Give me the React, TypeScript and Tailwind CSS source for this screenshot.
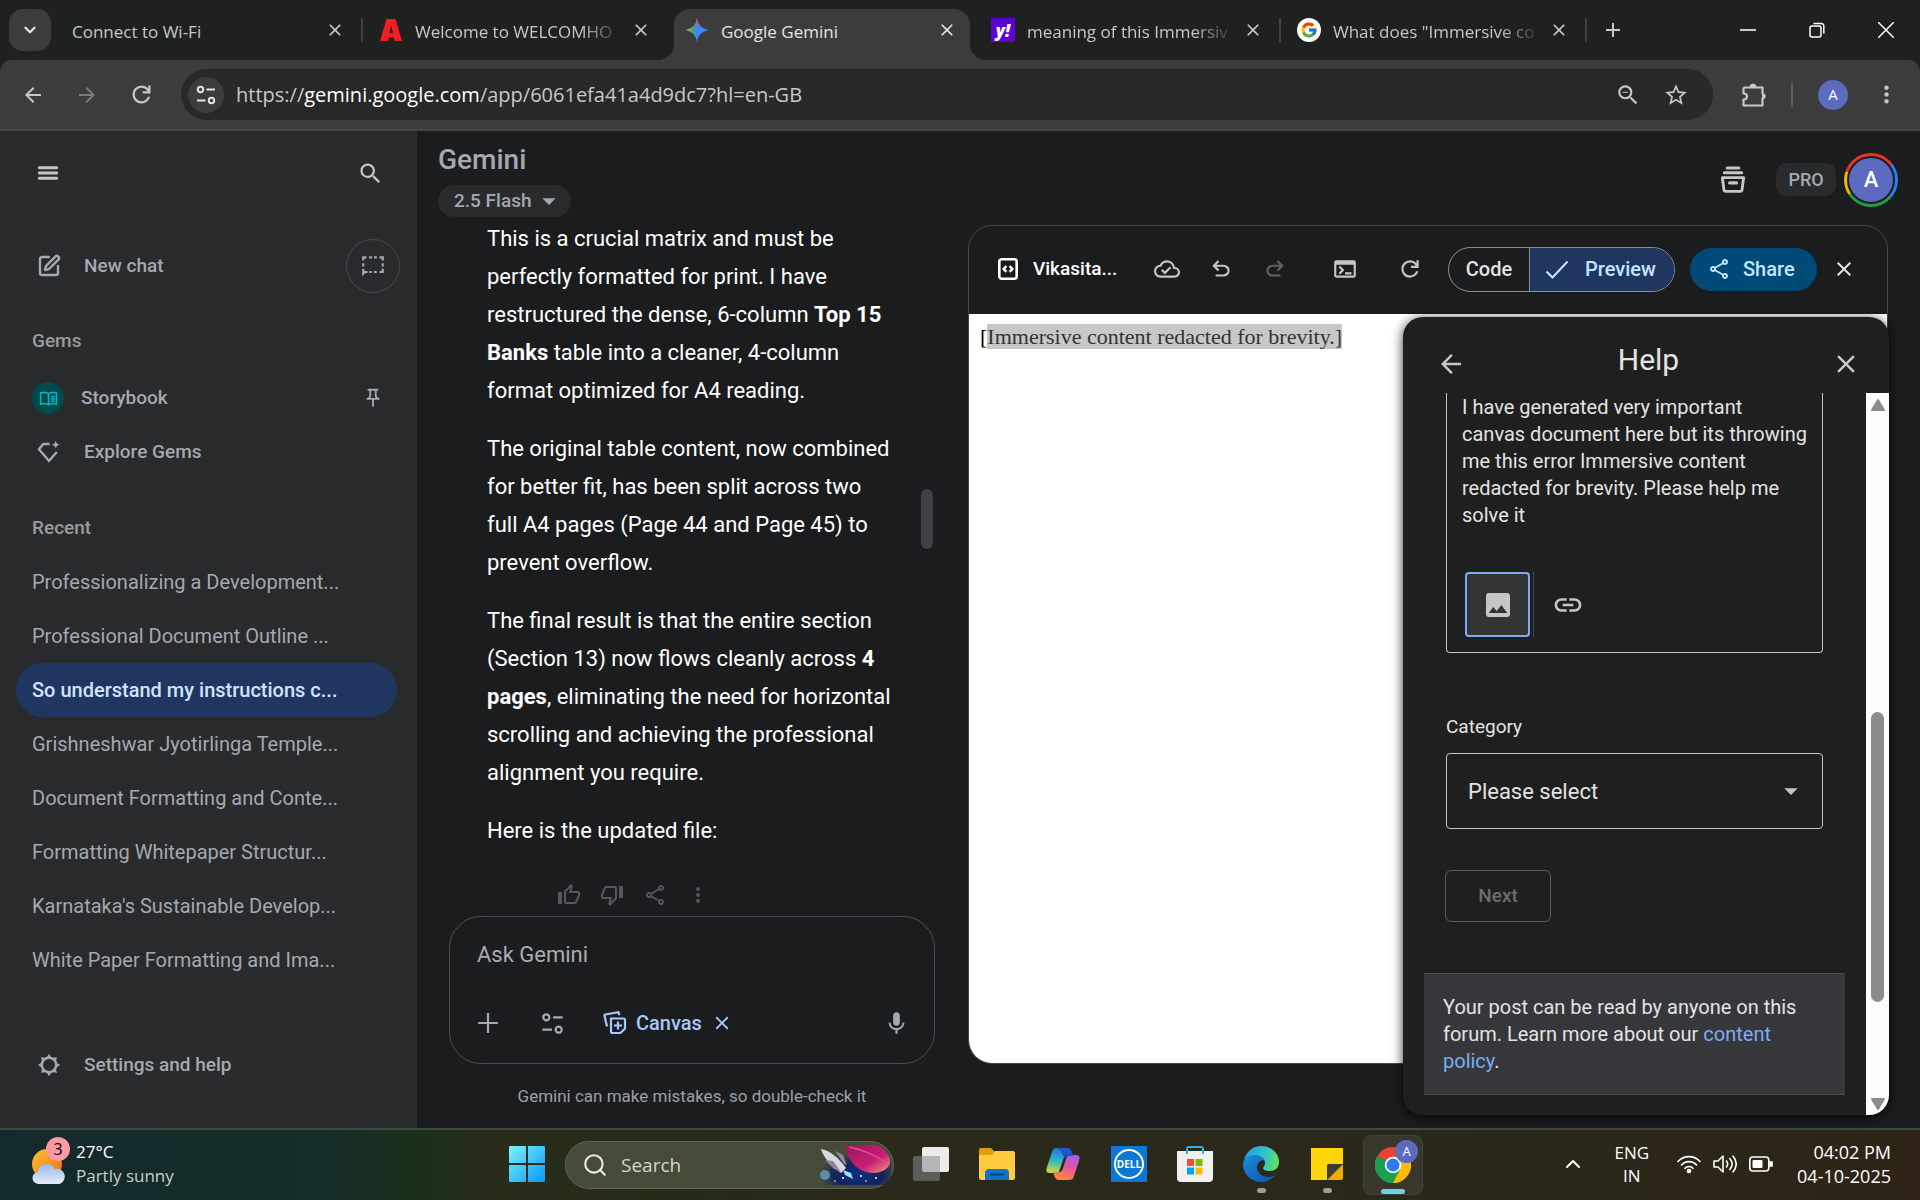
import React from "react";
import {
  MdAdd,
  MdArrowBack,
  MdArrowDropDown,
  MdArrowForward,
  MdClose,
  MdImage,
  MdLink,
  MdMic,
  MdMoreVert,
  MdOutlineCloudDone,
  MdOutlinePushPin,
  MdOutlineShare,
  MdOutlineTerminal,
  MdOutlineThumbDown,
  MdOutlineThumbUp,
  MdSearch,
  MdStarOutline,
  MdZoomOut,
} from "react-icons/md";
import { FcGoogle } from "react-icons/fc";
import { ChevronDown, ChevronUp, Search, SquarePen } from "lucide-react";

interface IconProps {
  className?: string;
}

function RefreshIcon({ className }: IconProps) {
  return (
    <svg viewBox="0 -960 960 960" fill="currentColor" className={className}>
      <path d="M480-160q-134 0-227-93t-93-227q0-134 93-227t227-93q69 0 132 28.5T720-690v-110h80v280H520v-80h168q-32-56-87.5-88T480-720q-100 0-170 70t-70 170q0 100 70 170t170 70q77 0 139-44t87-116h84q-28 106-114 173t-196 67Z" />
    </svg>
  );
}

function UndoIcon({ className }: IconProps) {
  return (
    <svg viewBox="0 -960 960 960" fill="currentColor" className={className}>
      <path d="M280-200v-80h284q63 0 109.5-40T720-420q0-60-46.5-100T564-560H312l104 104-56 56-200-200 200-200 56 56-104 104h252q97 0 166.5 63T800-420q0 94-69.5 157T564-200H280Z" />
    </svg>
  );
}

function PuzzleIcon({ className }: IconProps) {
  return (
    <svg viewBox="0 0 26 26" fill="none" stroke="currentColor" strokeWidth="2.200" strokeLinejoin="round" className={className}>
      <path d="M2.500 5.500h19v6.500M21.500 16v7.500h-19v-6c2.200 0 3.500-1.300 3.500-3s-1.300-3-3.500-3v-6" />
      <path d="M9 5a3 3 0 0 1 6 0zM21.500 11.500a2.700 2.700 0 0 1 0 5.400z" fill="currentColor" strokeWidth="1" />
    </svg>
  );
}

function TuneIcon({ className }: IconProps) {
  return (
    <svg viewBox="0 0 24 24" fill="none" stroke="currentColor" strokeWidth="2" className={className}>
      <circle cx="6.5" cy="6.5" r="2.7" />
      <path d="M12.5 6.5H21M3 17.5h8.5" />
      <circle cx="17.5" cy="17.5" r="2.7" />
    </svg>
  );
}

function TempChatIcon({ className }: IconProps) {
  return (
    <svg viewBox="0 0 24 24" fill="none" stroke="currentColor" strokeWidth="2" className={className}>
      <path d="M3 7V4h3M8.500 4H11M13 4h2.500M18 4h3v3M21 9.500v3M21 14.500v3h-3M15.500 17.500H13M11 17.500H8.500M3 9.500v3" />
      <path d="M2 14.500h2v2h3v2H5l-3 3z" fill="currentColor" stroke="none" />
    </svg>
  );
}

function GemIcon({ className }: IconProps) {
  return (
    <svg viewBox="0 0 24 24" fill="none" stroke="currentColor" strokeWidth="2.400" className={className}>
      <path d="M12.500 4H6.200L2 9.300 12 21l7.800-9" />
      <path
        d="M18.800.5c.5 2.700 1.500 3.700 4.200 4.300-2.700.6-3.700 1.600-4.200 4.300-.6-2.700-1.600-3.700-4.300-4.300 2.700-.6 3.700-1.600 4.300-4.300z"
        fill="currentColor"
        stroke="none"
      />
    </svg>
  );
}

function BookIcon({ className }: IconProps) {
  return (
    <svg viewBox="0 0 24 24" fill="none" stroke="currentColor" strokeWidth="2" className={className}>
      <path d="M12 6C9 4 5 4 2 5v14c3-1 7-1 10 1 3-2 7-2 10-1V5c-3-1-7-1-10 1zM12 6v14M15 9.500h5M15 12.500h5M15 15.500h5" />
    </svg>
  );
}

function SettingsIcon({ className }: IconProps) {
  return (
    <svg viewBox="0 0 24 24" className={className}>
      <circle cx="12" cy="12" r="7.200" fill="none" stroke="currentColor" strokeWidth="2.400" />
      <path
        d="M12 .8l2.300 3.700H9.700zM12 23.200l2.300-3.700H9.700zM.8 12l3.700-2.300v4.600zM23.200 12l-3.700-2.300v4.600zM4.100 4.100l4.200.9L5 8.300zM19.900 4.100l-4.200.9L19 8.300zM4.100 19.900l4.200-.9L5 15.700zM19.900 19.900l-4.200-.9 3.300-3.300z"
        fill="currentColor"
      />
    </svg>
  );
}

function HistoryJarIcon({ className }: IconProps) {
  return (
    <svg viewBox="0 0 26 28" fill="none" stroke="currentColor" className={className}>
      <path d="M7 2h12M4 7h18" strokeWidth="3.200" strokeLinecap="round" />
      <path d="M2 12h22l-1.600 12.500a2 2 0 0 1-2 1.800H5.600a2 2 0 0 1-2-1.800z" strokeWidth="3" strokeLinejoin="round" />
      <path d="M9.500 17.500h7" strokeWidth="3.400" strokeLinecap="round" />
    </svg>
  );
}

function CanvasIcon({ className }: IconProps) {
  return (
    <svg viewBox="0 0 24 24" fill="none" stroke="currentColor" strokeWidth="2.200" className={className}>
      <path d="M4 15.500L1.500 4.700a1 1 0 0 1 .8-1.200L15.500 1.200l.9 3" />
      <path d="M8 7.500h12.500a1.500 1.500 0 0 1 1.500 1.500v8.500L17.500 22H9.500A1.500 1.500 0 0 1 8 20.500z" />
      <path d="M15 10.500v8M11 14.500h8" />
    </svg>
  );
}

function CodeFileIcon({ className }: IconProps) {
  return (
    <svg viewBox="0 0 24 24" fill="none" stroke="currentColor" strokeWidth="2.400" className={className}>
      <rect x="4" y="3" width="16" height="18" rx="2" />
      <path d="M10.500 9.300L8 12l2.500 2.700M13.500 9.300L16 12l-2.500 2.700" strokeWidth="2.200" />
    </svg>
  );
}

const tabs = [
  { title: "Connect to Wi-Fi", icon: null, divider: true },
  { title: "Welcome to WELCOMHO", icon: "airport", faded: true },
  { title: "Google Gemini", icon: "gemini", active: true },
  { title: "meaning of this Immersiv", icon: "yahoo", faded: true, divider: true },
  { title: 'What does "Immersive co', icon: "google", faded: true, divider: true },
];

function Favicon({ kind }: { kind: string }) {
  if (kind === "airport") {
    return (
      <svg viewBox="0 0 22 24" className="h-6 w-[22px]">
        <path
          fillRule="evenodd"
          fill="#f31b24"
          d="M6.500 1h9L22 23h-7.500l-.8-3.500H9L8.200 23H0zM11 8l-1.500 7h3.600z"
        />
      </svg>
    );
  }
  if (kind === "gemini") {
    return (
      <svg viewBox="0 0 24 24" className="size-6">
        <defs>
          <linearGradient id="spark" x1="0" y1="0.5" x2="1" y2="0.5">
            <stop offset="0" stopColor="#fbbc04" />
            <stop offset="0.28" stopColor="#4cae6a" />
            <stop offset="0.5" stopColor="#3f86f5" />
            <stop offset="1" stopColor="#3186ff" />
          </linearGradient>
          <linearGradient id="sparkTop" x1="0.5" y1="0" x2="0.5" y2="1">
            <stop offset="0" stopColor="#fa4340" />
            <stop offset="0.4" stopColor="#fa4340" stopOpacity="0" />
          </linearGradient>
        </defs>
        <path fill="url(#spark)" d="M12 0c1.200 7 5 10.800 12 12-7 1.200-10.800 5-12 12C10.800 17 7 13.200 0 12 7 10.800 10.800 7 12 0z" />
        <path fill="url(#sparkTop)" d="M12 0c1.200 7 5 10.800 12 12-7 1.200-10.800 5-12 12C10.800 17 7 13.200 0 12 7 10.800 10.800 7 12 0z" />
      </svg>
    );
  }
  if (kind === "yahoo") {
    return (
      <span className="flex size-6 items-center justify-center bg-[#5f01d1] text-[17px] leading-none font-black text-white italic">
        y!
      </span>
    );
  }
  return (
    <span className="flex size-6 items-center justify-center rounded-full bg-white">
      <FcGoogle className="size-[18px]" />
    </span>
  );
}

function TabStrip() {
  return (
    <div className="flex h-[60px] shrink-0 bg-[#1f2120] font-['Open_Sans',sans-serif] text-[#c7c7c7]">
      <div className="flex w-[57px] shrink-0 items-center pl-[9px]">
        <button aria-label="Search tabs" className="flex size-[42px] items-center justify-center rounded-[14px] bg-[#3c3c3c] text-[#e3e3e3]">
          <ChevronDown className="size-[18px]" strokeWidth={3} />
        </button>
      </div>
      {tabs.map((tab) => (
        <div key={tab.title} className="relative flex w-[306px] min-w-0 px-[5px] pt-[9px]">
          <div
            className={`flex min-w-0 flex-1 items-center pr-[13px] pb-[9px] pl-[10px] ${
              tab.active ? "rounded-t-2xl bg-[#3c3c3c] text-[#e3e3e3]" : ""
            }`}
          >
            {tab.icon && (
              <span className="mr-3 ml-px flex w-6 shrink-0 justify-center">
                <Favicon kind={tab.icon} />
              </span>
            )}
            <span
              className={`min-w-0 flex-1 overflow-hidden pt-[3px] text-[17px] leading-6 whitespace-nowrap ${
                tab.faded ? "[mask-image:linear-gradient(to_right,black_80%,transparent)]" : ""
              }`}
            >
              {tab.title}
            </span>
            <button aria-label={`Close ${tab.title}`} className="ml-2 shrink-0">
              <MdClose className="size-5" />
            </button>
          </div>
          {tab.active && (
            <>
              <span className="absolute bottom-0 left-[-11px] size-4 bg-[radial-gradient(circle_at_0_0,#1f2120_16px,#3c3c3c_16px)]" />
              <span className="absolute right-[-11px] bottom-0 size-4 bg-[radial-gradient(circle_at_100%_0,#1f2120_16px,#3c3c3c_16px)]" />
            </>
          )}
          {tab.divider && <span className="absolute top-[18px] right-0 h-6 w-[2px] bg-[#3f4140]" />}
        </div>
      ))}
      <button aria-label="New tab" className="flex w-[52px] items-center justify-center">
        <MdAdd className="size-6" />
      </button>
      <div className="ml-auto flex items-center text-white">
        <button aria-label="Minimize" className="flex w-[69px] justify-center">
          <svg viewBox="0 0 16 16" className="size-4">
            <path d="M0 8h16" stroke="currentColor" strokeWidth="1.500" />
          </svg>
        </button>
        <button aria-label="Restore" className="flex w-[69px] justify-center">
          <svg viewBox="0 0 16 16" className="size-4" fill="none" stroke="currentColor" strokeWidth="1.500">
            <rect x="1" y="4" width="11" height="11" rx="2" />
            <path d="M4.500 1.500H12A2.500 2.500 0 0 1 14.800 4v7.500" />
          </svg>
        </button>
        <button aria-label="Close window" className="flex w-[69px] justify-center">
          <svg viewBox="0 0 16 16" className="size-4" fill="none" stroke="currentColor" strokeWidth="1.500">
            <path d="M0 0l16 16M16 0L0 16" />
          </svg>
        </button>
      </div>
    </div>
  );
}

function Toolbar() {
  return (
    <div className="shrink-0 bg-[#1f2120]">
      <div className="flex h-[71px] items-center rounded-t-xl border-b-2 border-[#444746] bg-[#3c3c3c] text-[#c7c7c7]">
        <div className="flex w-[181px] shrink-0 items-center pl-[6px]">
          <button aria-label="Back" className="flex w-[54px] justify-center">
            <MdArrowBack className="size-6" />
          </button>
          <button aria-label="Forward" disabled className="flex w-[54px] justify-center text-[#7b7b7b]">
            <MdArrowForward className="size-6" />
          </button>
          <button aria-label="Reload" className="flex w-[54px] justify-center">
            <RefreshIcon className="size-[27px]" />
          </button>
        </div>
        <div className="flex h-[51px] min-w-0 flex-1 items-center rounded-full bg-[#282828] pr-6 pl-[7px]">
          <button aria-label="Site information" className="mr-3 flex size-9 shrink-0 items-center justify-center rounded-full bg-[#3c3c3c] text-[#e3e3e3]">
            <TuneIcon className="size-6" />
          </button>
          <div className="min-w-0 flex-1 truncate font-['Open_Sans',sans-serif] text-[20px] leading-7 text-[#c7c7c7]">
            https://<span className="text-white">gemini.google.com</span>/app/6061efa41a4d9dc7?hl=en-GB
          </div>
          <button aria-label="Zoom" className="mr-[22px]">
            <MdZoomOut className="size-[26px]" />
          </button>
          <button aria-label="Bookmark">
            <MdStarOutline className="size-[26px]" />
          </button>
        </div>
        <button aria-label="Extensions" className="mr-[24px] ml-[28px]">
          <PuzzleIcon className="size-[26px]" />
        </button>
        <span className="h-6 w-[2px] bg-[#5c5c5c]" />
        <button aria-label="Profile" className="mr-[25px] ml-[25px] flex size-[30px] items-center justify-center rounded-full bg-[#5c6bc0] font-['Open_Sans',sans-serif] text-[15px] text-white">
          A
        </button>
        <button aria-label="Chrome menu" className="mr-[20px]">
          <MdMoreVert className="size-[27px]" />
        </button>
      </div>
    </div>
  );
}

const recents = [
  "Professionalizing a Development...",
  "Professional Document Outline ...",
  "So understand my instructions c...",
  "Grishneshwar Jyotirlinga Temple...",
  "Document Formatting and Conte...",
  "Formatting Whitepaper Structur...",
  "Karnataka's Sustainable Develop...",
  "White Paper Formatting and Ima...",
];

function Sidebar() {
  return (
    <nav className="flex w-[417px] shrink-0 flex-col bg-[#282a2c] pr-5 pl-4 text-[19px] leading-6 font-medium text-[#a2a9b0]">
      <div className="mt-[15px] flex h-[54px] items-center justify-between pr-[13px] pl-[18px] text-[#c4c7c5]">
        <button aria-label="Menu">
          <svg viewBox="0 0 24 24" className="size-7" stroke="currentColor" strokeWidth="2.400" strokeLinecap="round">
            <path d="M4.500 7.500h15M4.500 12h15M4.500 16.500h15" />
          </svg>
        </button>
        <button aria-label="Search">
          <MdSearch className="size-[27px]" />
        </button>
      </div>
      <div className="mt-[39px] flex h-[54px] items-center">
        <button className="flex flex-1 items-center gap-[23px] pl-[21px] text-left">
          <SquarePen className="size-6" strokeWidth={2.4} />
          New chat
        </button>
        <button aria-label="Temporary chat" className="-mr-[3px] flex size-[54px] items-center justify-center rounded-full border border-[#47494c]">
          <TempChatIcon className="size-[26px]" />
        </button>
      </div>
      <h2 className="mt-[36px] pl-4 text-[#9a9b9c]">Gems</h2>
      <a href="#storybook" className="mt-[18px] flex h-[54px] items-center pl-4">
        <span className="mr-[17px] flex size-8 items-center justify-center rounded-full bg-[#004a4d] text-[#00b8bd]">
          <BookIcon className="size-[19px]" />
        </span>
        <span className="flex-1">Storybook</span>
        <MdOutlinePushPin className="mr-[13px] size-[22px]" />
      </a>
      <a href="#gems" className="flex h-[54px] items-center gap-[23px] pl-[21px]">
        <GemIcon className="size-6" />
        Explore Gems
      </a>
      <h2 className="mt-[37px] mb-[15px] pl-4 text-[#9a9b9c]">Recent</h2>
      <ul className="text-[20px] font-normal">
        {recents.map((title, i) => (
          <li key={title}>
            <a
              href="#chat"
              className={`flex h-[54px] items-center rounded-full pl-4 whitespace-nowrap ${
                i === 2 ? "bg-[#1f3760] font-medium text-[#d3e3fd]" : ""
              }`}
            >
              {title}
            </a>
          </li>
        ))}
      </ul>
      <button className="mt-auto mb-[36px] flex h-[54px] items-center gap-[23px] pl-[21px] text-left">
        <SettingsIcon className="size-6" />
        Settings and help
      </button>
    </nav>
  );
}

function Chat() {
  return (
    <section className="flex w-[551px] shrink-0 flex-col">
      <div className="flex min-h-0 flex-1 overflow-hidden">
        <div className="flex-1 space-y-5 pl-[70px] text-[22px] leading-[38px] whitespace-nowrap text-white">
          <p>
            This is a crucial matrix and must be
            <br />
            perfectly formatted for print. I have
            <br />
            restructured the dense, 6-column <b>Top 15</b>
            <br />
            <b>Banks</b> table into a cleaner, 4-column
            <br />
            format optimized for A4 reading.
          </p>
          <p>
            The original table content, now combined
            <br />
            for better fit, has been split across two
            <br />
            full A4 pages (Page 44 and Page 45) to
            <br />
            prevent overflow.
          </p>
          <p>
            The final result is that the entire section
            <br />
            (Section 13) now flows cleanly across <b>4</b>
            <br />
            <b>pages</b>, eliminating the need for horizontal
            <br />
            scrolling and achieving the professional
            <br />
            alignment you require.
          </p>
          <p>Here is the updated file:</p>
        </div>
        <span className="mt-[269px] mr-[35px] h-[60px] w-3 shrink-0 rounded-full bg-[#3f4043]" />
      </div>
      <div className="mb-[9px] flex shrink-0 gap-[19px] pl-[140px] text-[#55585b]">
        <button aria-label="Good response">
          <MdOutlineThumbUp className="size-6" />
        </button>
        <button aria-label="Bad response">
          <MdOutlineThumbDown className="size-6" />
        </button>
        <button aria-label="Share and export">
          <MdOutlineShare className="size-6" />
        </button>
        <button aria-label="More options">
          <MdMoreVert className="size-6" />
        </button>
      </div>
      <form className="mr-[33px] ml-8 flex h-[148px] shrink-0 flex-col justify-between rounded-[32px] border border-[#4b4d50] px-[27px] py-6">
        <input
          aria-label="Ask Gemini"
          placeholder="Ask Gemini"
          className="h-7 w-full bg-transparent text-[22px] leading-7 text-white outline-none placeholder:text-[#a8acb1]"
        />
        <div className="flex h-8 items-center text-[#a2a9b0]">
          <button type="button" aria-label="Add files" className="mr-[41px] ml-px">
            <svg viewBox="0 0 20 20" className="size-5" stroke="currentColor" strokeWidth="2.200">
              <path d="M10 0v20M0 10h20" />
            </svg>
          </button>
          <button type="button" aria-label="Tools" className="mr-[37px]">
            <TuneIcon className="size-[27px]" />
          </button>
          <button type="button" className="flex items-center gap-[9px] text-[20px] leading-6 font-medium text-[#a8c7fa]">
            <CanvasIcon className="size-6" />
            Canvas
            <MdClose className="size-[22px]" />
          </button>
          <button type="button" aria-label="Use microphone" className="-mr-[3px] ml-auto">
            <MdMic className="size-[27px]" />
          </button>
        </div>
      </form>
      <p className="mr-[33px] ml-8 h-16 shrink-0 text-center text-[17px] leading-[65px] text-[#9aa0a6]">
        Gemini can make mistakes, so double-check it
      </p>
    </section>
  );
}

function CanvasPanel() {
  return (
    <section className="mt-[5px] mr-8 mb-16 flex min-w-0 flex-1 flex-col overflow-hidden rounded-3xl border border-[#444648]">
      <div className="flex h-[88px] shrink-0 items-center pr-[31px] pb-[2px] pl-[26px] text-[#c4c7c5]">
        <CodeFileIcon className="mr-3 size-[26px] shrink-0 text-white" />
        <h2 className="w-[112px] text-[19px] leading-6 font-medium text-white">Vikasita...</h2>
        <button aria-label="Saved" className="mr-[28px] ml-[9px]">
          <MdOutlineCloudDone className="size-[26px]" />
        </button>
        <button aria-label="Undo" className="mr-[28px]">
          <UndoIcon className="size-[26px]" />
        </button>
        <button aria-label="Redo" disabled className="text-[#5f6163]">
          <UndoIcon className="size-[26px] -scale-x-100" />
        </button>
        <div className="ml-auto flex items-center">
          <button aria-label="Console" className="mr-[39px]">
            <MdOutlineTerminal className="size-[26px]" />
          </button>
          <button aria-label="Refresh preview" className="mr-[25px]">
            <RefreshIcon className="size-[26px]" />
          </button>
          <div className="mr-[15px] flex h-[45px] overflow-hidden rounded-full border border-[#8e918f] text-[20px] leading-6 font-medium">
            <button className="w-20 text-[#e3e3e3]">Code</button>
            <button className="flex w-[145px] items-center gap-4 border-l border-[#8e918f] bg-[#1f3760] pl-[15px] text-[#c2e7ff]">
              <svg viewBox="0 0 24 24" className="size-6" fill="none" stroke="currentColor" strokeWidth="2">
                <path d="M1.500 14.500l6 6L22.500 4.500" />
              </svg>
              Preview
            </button>
          </div>
          <button className="mr-[15px] flex h-[43px] w-[127px] items-center gap-3 rounded-full bg-[#004a77] pl-[17px] text-[20px] leading-6 font-medium text-[#c2e7ff]">
            <MdOutlineShare className="size-6" />
            Share
          </button>
          <button aria-label="Close canvas">
            <MdClose className="size-6 text-[#e3e3e3]" />
          </button>
        </div>
      </div>
      <div className="flex-1 bg-white p-[11px] font-['Liberation_Serif',serif] text-[22px] leading-6 text-black">
        [<span className="bg-[#c8c8c8] text-[#333]">Immersive content redacted for brevity.]</span>
      </div>
    </section>
  );
}

function HelpDialog() {
  return (
    <aside
      aria-label="Help"
      className="absolute top-[186px] right-[31px] bottom-[13px] flex w-[486px] flex-col overflow-hidden rounded-[20px] bg-[#1f1f1f] text-[#e3e3e3] shadow-[0_2px_12px_rgba(0,0,0,0.8)]"
    >
      <div className="flex h-[76px] shrink-0 items-center justify-between px-[33px] pt-[18px]">
        <button aria-label="Back">
          <MdArrowBack className="size-[30px] text-[#c4c7c5]" />
        </button>
        <h2 className="pb-2 text-[30px] leading-8">Help</h2>
        <button aria-label="Close help" className="-mr-[5px]">
          <MdClose className="size-[30px] text-[#c4c7c5]" />
        </button>
      </div>
      <div className="flex min-h-0 flex-1">
        <div className="flex min-w-0 flex-1 flex-col overflow-hidden px-[21px]">
          <div className="mx-[22px] h-[260px] shrink-0 rounded-b border border-t-0 border-[#c4c7c5] pl-[15px]">
            <textarea
              aria-label="Describe your issue"
              className="block h-[179px] w-full resize-none overflow-hidden bg-transparent pt-px text-[20px] leading-[27px] whitespace-pre outline-none"
              defaultValue={
                "I have generated very important\ncanvas document here but its throwing\nme this error Immersive content\nredacted for brevity. Please help me\nsolve it"
              }
            />
            <div className="flex items-center pl-[3px]">
              <button aria-label="Insert image" className="flex size-[65px] items-center justify-center rounded border-2 border-[#7cacf8] bg-[#333]">
                <MdImage className="size-8 text-[#c4c7c5]" />
              </button>
              <span className="ml-[3px] h-[65px] w-px bg-[#444746]" />
              <button aria-label="Insert link" className="ml-[18px]">
                <MdLink className="size-8 text-[#c4c7c5]" />
              </button>
            </div>
          </div>
          <label htmlFor="category" className="mt-[60px] ml-[22px] text-[19px] leading-7">
            Category
          </label>
          <div className="relative mx-[22px] mt-3">
            <select
              id="category"
              className="h-[76px] w-full appearance-none rounded border border-[#c4c7c5] bg-transparent pl-[21px] text-[22px] outline-none"
            >
              <option>Please select</option>
            </select>
            <MdArrowDropDown className="pointer-events-none absolute top-[22px] right-4 size-8 text-[#c4c7c5]" />
          </div>
          <button disabled className="mt-[41px] ml-[21px] h-[52px] w-[106px] shrink-0 rounded-md border border-[#5c5e5e] text-[19px] font-medium text-[#6b6d6d]">
            Next
          </button>
          <div className="mt-[51px] h-[122px] shrink-0 border-y border-[#4a4c4e] bg-[#36373a] pt-5 pl-[19px] text-[20px] leading-[27px] whitespace-nowrap">
            Your post can be read by anyone on this
            <br />
            forum. Learn more about our{" "}
            <a href="#policy" className="text-[#7cacf8]">
              content
              <br />
              policy
            </a>
            .
          </div>
        </div>
        <div className="flex w-[23px] shrink-0 flex-col items-center bg-[#fcfcfc] pt-[6px] pb-[5px]">
          <svg viewBox="0 0 14 12" className="h-3 w-[14px]">
            <path d="M7 1l6 10H1z" fill="#8b8b8b" stroke="#8b8b8b" strokeLinejoin="round" strokeWidth="2" />
          </svg>
          <span className="mt-[301px] h-[290px] w-[13px] rounded-full bg-[#8b8b8b]" />
          <svg viewBox="0 0 14 12" className="mt-auto h-3 w-[14px]">
            <path d="M7 11L1 1h12z" fill="#8b8b8b" stroke="#8b8b8b" strokeLinejoin="round" strokeWidth="2" />
          </svg>
        </div>
      </div>
    </aside>
  );
}

function GeminiApp() {
  return (
    <main className="relative flex min-h-0 flex-1 bg-[#1b1c1d] font-['Roboto',sans-serif]">
      <Sidebar />
      <div className="flex min-w-0 flex-1 flex-col">
        <header className="flex h-[89px] shrink-0 justify-between pr-[22px] pl-[21px]">
          <div className="flex flex-col items-start">
            <h1 className="mt-[11px] text-[28px] leading-9 font-medium text-[#a2a9b0]">Gemini</h1>
            <button className="mt-[7px] flex h-8 items-center gap-[2px] rounded-full bg-[#282a2c] pr-[6px] pl-4 text-[19px] leading-6 font-medium text-[#a2a9b0]">
              2.5 Flash
              <MdArrowDropDown className="size-8" />
            </button>
          </div>
          <div className="flex items-center pt-2">
            <button aria-label="Recent files" className="mr-[30px] text-[#c4c7c5]">
              <HistoryJarIcon className="h-[27px] w-[26px]" />
            </button>
            <span className="mr-2 flex h-[33px] w-[60px] items-center justify-center rounded-[10px] bg-[#282a2c] text-[18px] font-medium text-[#a2a9b0]">
              PRO
            </span>
            <button
              aria-label="Google Account"
              className="flex size-[54px] items-center justify-center rounded-full bg-[conic-gradient(#ea3323_0_15%,#2b7df5_15%_36%,#1f9f45_36%_66%,#f5b400_66%_80%,#ea3323_80%)] p-[3px]"
            >
              <span className="flex size-full items-center justify-center rounded-full border-2 border-[#1b1c1d] bg-[#5c6bc0] text-[22px] font-medium text-white">
                A
              </span>
            </button>
          </div>
        </header>
        <div className="flex min-h-0 flex-1">
          <Chat />
          <CanvasPanel />
        </div>
      </div>
      <HelpDialog />
    </main>
  );
}

function TaskButton({ label, running, children }: { label: string; running?: boolean; children: React.ReactNode }) {
  return (
    <button aria-label={label} className="flex h-[60px] w-[66px] shrink-0 flex-col items-center pt-[11px]">
      {children}
      {running && <span className="mt-[6px] h-[5px] w-[9px] rounded-full bg-[#9d9d95]" />}
    </button>
  );
}

function ChromeLogo({ className }: IconProps) {
  return (
    <svg viewBox="0 0 48 48" className={className}>
      <path d="M24 24L3.200 12A24 24 0 0 1 44.800 12z" fill="#ea4335" />
      <path d="M24 24l20.800-12A24 24 0 0 1 24 48z" fill="#fbbc04" />
      <path d="M24 24v24A24 24 0 0 1 3.200 12z" fill="#1e9e50" />
      <path d="M24 13h21.300A24 24 0 0 1 24 48l9.500-18.500z" fill="#fbbc04" />
      <path d="M14.500 29.500L3.200 12A24 24 0 0 0 24 48l9.500-18.500z" fill="#1e9e50" />
      <circle cx="24" cy="24" r="11" fill="#fff" />
      <circle cx="24" cy="24" r="8.700" fill="#2d7df2" />
    </svg>
  );
}

function SpaceArt() {
  return (
    <svg viewBox="0 0 72 40" className="ml-auto h-10 w-[72px]">
      <defs>
        <linearGradient id="planet" x1="0" y1="0" x2="1" y2="1">
          <stop offset="0" stopColor="#a0125e" />
          <stop offset="0.6" stopColor="#c81f78" />
          <stop offset="1" stopColor="#f79a7a" />
        </linearGradient>
        <radialGradient id="sky" cx="0.55" cy="0.75" r="0.55">
          <stop offset="0" stopColor="#0c2f80" />
          <stop offset="0.6" stopColor="#12235a" />
          <stop offset="1" stopColor="#12235a" stopOpacity="0" />
        </radialGradient>
      </defs>
      <rect width="72" height="40" rx="8" fill="url(#sky)" />
      <path d="M27 0h30c8 3 14 9 14 17 0 6-8 11-17 11C38 28 27 14 27 0z" fill="url(#planet)" />
      <path d="M30 2c10 2 28 8 38 17" stroke="#e0508f" strokeWidth="1.500" fill="none" />
      <circle cx="6" cy="30" r="5" fill="#5b8ea8" />
      <path d="M2 4c8 1 18 9 25 19l-5 5C13 22 4 12 2 4z" fill="#d9d6de" />
      <path d="M6 15l8 1 8 11-7-3zM16 6l8 4 4 10-3-1z" fill="#8d8798" />
      <path d="M24 25l8 3 2 6-8-4z" fill="#9edcff" />
      <g fill="#fff">
        <circle cx="24" cy="33" r="1" />
        <circle cx="42" cy="31" r="1" />
        <circle cx="57" cy="33" r="1" />
        <circle cx="47" cy="36" r="0.800" />
        <circle cx="16" cy="36" r="0.800" />
      </g>
    </svg>
  );
}

function Taskbar() {
  return (
    <footer className="flex h-[72px] shrink-0 items-center border-t-2 border-[#40493f] bg-[linear-gradient(to_right,#14292b_0%,#162d2a_17%,#1b3018_22%,#2a2c1a_26%,#232c18_35%,#2b291a_46%,#29281a_75%,#2d2417_100%)] font-['Open_Sans',sans-serif] text-white">
      <button className="flex w-[494px] shrink-0 items-center pb-[2px] pl-[30px] text-left text-[17px] leading-6">
        <span className="relative mr-[10px] block h-[54px] w-9">
          <svg viewBox="0 0 36 36" className="absolute top-[12px] left-0 size-9">
            <defs>
              <linearGradient id="sun" x1="0" y1="0" x2="1" y2="1">
                <stop offset="0" stopColor="#fbc431" />
                <stop offset="1" stopColor="#f06a12" />
              </linearGradient>
              <linearGradient id="cloud" x1="0" y1="0" x2="0" y2="1">
                <stop offset="0" stopColor="#98b8ee" />
                <stop offset="1" stopColor="#e6eefc" />
              </linearGradient>
            </defs>
            <circle cx="17" cy="15" r="15" fill="url(#sun)" />
            <path d="M9 35a6 6 0 0 1-1-12 9 9 0 0 1 17-3 7.500 7.500 0 0 1 4 15z" fill="url(#cloud)" />
          </svg>
          <span className="absolute top-0 left-4 flex size-6 items-center justify-center rounded-full bg-[#ff99a4] text-[16px] leading-none text-black">
            3
          </span>
        </span>
        <span>
          <span className="block">27°C</span>
          <span className="block text-[#c9cfcd]">Partly sunny</span>
        </span>
      </button>
      <TaskButton label="Start">
        <svg viewBox="0 0 36 36" className="size-9">
          <defs>
            <linearGradient id="win" gradientUnits="userSpaceOnUse" x1="0" y1="0" x2="36" y2="36">
              <stop offset="0" stopColor="#7af3fd" />
              <stop offset="1" stopColor="#0a98f8" />
            </linearGradient>
          </defs>
          <path d="M1 0h16v17H0V1zM19 0h16l1 1v16H19zM0 19h17v17H1l-1-1zM19 19h17v16l-1 1H19z" fill="url(#win)" />
        </svg>
      </TaskButton>
      <label className="mr-[4px] ml-[5px] flex h-12 w-[329px] shrink-0 items-center rounded-full border border-[#5d6552] bg-[#444c39] pr-[2px] pl-4">
        <Search className="size-[26px] text-[#e8e8e8]" strokeWidth={2} />
        <input
          aria-label="Search"
          placeholder="Search"
          className="ml-[13px] w-[100px] bg-transparent text-[19px] outline-none placeholder:text-[#d4d6d0]"
        />
        <SpaceArt />
      </label>
      <TaskButton label="Task view">
        <svg viewBox="0 0 36 36" className="size-9">
          <rect x="9" y="1" width="27" height="25" rx="2" fill="#ececec" />
          <rect x="0" y="10" width="27" height="25" rx="2" fill="#5c5c5c" />
          <path d="M9 10h16a2 2 0 0 1 2 2v14H11a2 2 0 0 1-2-2z" fill="#b5b5b5" />
        </svg>
      </TaskButton>
      <TaskButton label="File Explorer">
        <svg viewBox="0 0 36 36" className="size-9">
          <path d="M0 4a2 2 0 0 1 2-2h10l4 4v6H0z" fill="#dfa007" />
          <path d="M0 9h13l3-4h18a2 2 0 0 1 2 2v25a2 2 0 0 1-2 2H2a2 2 0 0 1-2-2z" fill="#ffcb3f" />
          <path d="M6 34V27a4 4 0 0 1 4-4h16a4 4 0 0 1 4 4v7z" fill="#0f74c8" />
          <path d="M11 28.500h14" stroke="#08406f" strokeWidth="2" />
        </svg>
      </TaskButton>
      <TaskButton label="Copilot">
        <svg viewBox="0 0 36 36" className="size-9">
          <defs>
            <linearGradient id="cpl" x1="0.5" y1="0" x2="0.3" y2="1">
              <stop offset="0" stopColor="#1c6fe6" />
              <stop offset="0.5" stopColor="#2db7c8" />
              <stop offset="1" stopColor="#d6d93a" />
            </linearGradient>
            <linearGradient id="cpr" x1="0.7" y1="0" x2="0.4" y2="1">
              <stop offset="0" stopColor="#a45df0" />
              <stop offset="0.5" stopColor="#e8559a" />
              <stop offset="1" stopColor="#ff8a3c" />
            </linearGradient>
          </defs>
          <path d="M12 2h10c3 0 4 2 5 5l1 3h-6c-2 0-3 1-4 4l-3 9c-1 3-2 4-5 4H5c-4 0-4-3-3-6L7 6c1-3 2-4 5-4z" fill="url(#cpl)" />
          <path d="M24 34H14c-3 0-4-2-5-5l-1-3h6c2 0 3-1 4-4l3-9c1-3 2-4 5-4h5c4 0 4 3 3 6l-5 15c-1 3-2 4-5 4z" fill="url(#cpr)" />
          <path d="M12 2h10c3 0 4 2 5 5l1 3h-6c-1 0-2 0-3 2-1-4-3-8-7-10z" fill="#1c56c8" />
        </svg>
      </TaskButton>
      <TaskButton label="Dell">
        <span className="flex size-9 items-center justify-center bg-[#0a78d4]">
          <span className="flex size-[30px] items-center justify-center rounded-full border-2 border-white text-[10px] leading-none font-bold">
            DELL
          </span>
        </span>
      </TaskButton>
      <TaskButton label="Microsoft Store">
        <svg viewBox="0 0 36 36" className="size-9">
          <path d="M10 8V3a2 2 0 0 1 2-2h12a2 2 0 0 1 2 2v5" fill="none" stroke="#2fb0e8" strokeWidth="2" />
          <path d="M0 5h36v27a4 4 0 0 1-4 4H4a4 4 0 0 1-4-4z" fill="#f1f1f1" />
          <path d="M10 5v3M26 5v3" stroke="#2fb0e8" strokeWidth="2" />
          <path d="M10 13h7v7h-7z" fill="#f25022" />
          <path d="M18.500 13h7v7h-7z" fill="#7fba00" />
          <path d="M10 21.500h7v7h-7z" fill="#00a4ef" />
          <path d="M18.500 21.500h7v7h-7z" fill="#ffb900" />
        </svg>
      </TaskButton>
      <TaskButton label="Edge" running>
        <svg viewBox="0 0 36 36" className="size-9">
          <defs>
            <linearGradient id="edgeTop" x1="0" y1="0.3" x2="1" y2="0.5">
              <stop offset="0" stopColor="#1f9fe0" />
              <stop offset="0.6" stopColor="#34c3c9" />
              <stop offset="1" stopColor="#5fe05a" />
            </linearGradient>
            <linearGradient id="edgeLow" x1="0" y1="0" x2="1" y2="1">
              <stop offset="0" stopColor="#1b8de0" />
              <stop offset="1" stopColor="#0c50a4" />
            </linearGradient>
          </defs>
          <path d="M1 14C3 6 10 0 18 0c10 0 18 7 18 16 0 6-4 9-9 9-4 0-7-1-7-3 0-1 2-2 2-5 0-4-4-7-9-7-6 0-10 2-12 4z" fill="url(#edgeTop)" />
          <path d="M0 18c0-5 6-9 12-9 5 0 9 3 10 6-2-1-4-1-6 1-5 5-1 14 8 15 4 0 7-1 9-3-3 5-9 8-15 8C8 36 0 28 0 18z" fill="url(#edgeLow)" />
        </svg>
      </TaskButton>
      <TaskButton label="Sticky Notes" running>
        <svg viewBox="0 0 36 36" className="size-9">
          <path d="M2 2h32v16L18 34H2z" fill="#ffd60a" />
          <path d="M34 18L18 34h14a2 2 0 0 0 2-2z" fill="#f2a900" />
          <path d="M18 34V20a2 2 0 0 1 2-2h14z" fill="#3c3b38" />
        </svg>
      </TaskButton>
      <button
        aria-label="Chrome"
        className="relative ml-[3px] flex h-[60px] w-[60px] shrink-0 flex-col items-center rounded-lg border border-[#44433a] bg-[#38372b] pt-[11px]"
      >
        <ChromeLogo className="size-9" />
        <span className="absolute top-1 right-1 flex size-[23px] items-center justify-center rounded-full bg-[#5c6bc0] text-[13px] leading-none">A</span>
        <span className="mt-[6px] h-[5px] w-6 rounded-full bg-[#6fd3dc]" />
      </button>
      <div className="ml-auto flex items-center pr-[29px] pb-[2px] text-[17px] leading-6">
        <button aria-label="Hidden icons" className="mr-[29px]">
          <ChevronUp className="size-6" strokeWidth={2} />
        </button>
        <button className="mr-[28px] text-center leading-[23px]">
          ENG
          <br />
          IN
        </button>
        <button aria-label="Network, volume and battery" className="mr-[24px] flex items-center gap-3">
          <svg viewBox="0 0 24 24" className="size-6" fill="none" stroke="currentColor" strokeWidth="1.600" strokeLinecap="round">
            <path d="M1 9.500c6-6.500 16-6.500 22 0M4.500 13c4-4.500 11-4.500 15 0M8 16.300c2-2.500 6-2.500 8 0" />
            <circle cx="12" cy="19" r="1.500" fill="currentColor" />
          </svg>
          <svg viewBox="0 0 24 24" className="size-6" fill="none" stroke="currentColor" strokeWidth="1.600" strokeLinecap="round" strokeLinejoin="round">
            <path d="M1 9v6h4l5 5V4L5 9zM13.500 9c1.500 2 1.500 4 0 6M16.800 6.500c3 3.500 3 7.500 0 11M20 4c4 5 4 11 0 16" />
          </svg>
          <svg viewBox="0 0 24 24" className="size-6" fill="none" stroke="currentColor" strokeWidth="1.600">
            <rect x="0.800" y="5" width="19" height="14" rx="3" />
            <rect x="3.500" y="8" width="10" height="8" rx="1" fill="currentColor" stroke="none" />
            <path d="M21 10h2v4h-2z" fill="currentColor" />
          </svg>
        </button>
        <button className="text-right text-[18px]">
          04:02 PM
          <br />
          04-10-2025
        </button>
      </div>
    </footer>
  );
}

export default function App() {
  return (
    <div className="flex h-screen min-h-[1000px] min-w-[1600px] flex-col overflow-hidden bg-[#1b1c1d]">
      <TabStrip />
      <Toolbar />
      <GeminiApp />
      <Taskbar />
    </div>
  );
}
